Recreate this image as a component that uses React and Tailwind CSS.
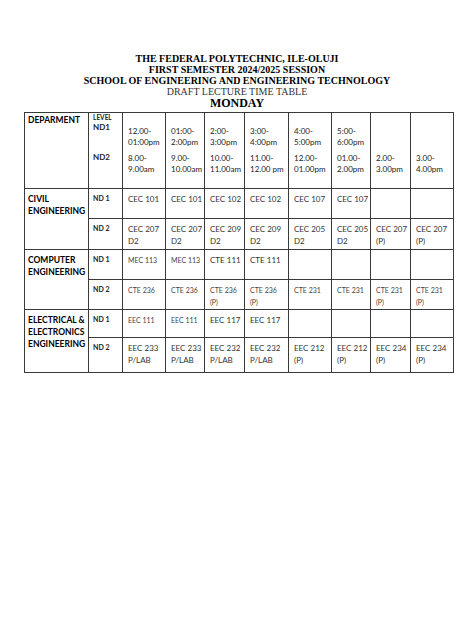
import React from 'react';

const cols = [64, 34, 43, 39, 40, 44, 43, 39, 40, 43];

const times = [
  ['12.00-', '01:00pm', '8.00-', '9.00am'],
  ['01:00-', '2:00pm', '9.00-', '10.00am'],
  ['2:00-', '3:00pm', '10.00-', '11.00am'],
  ['3:00-', '4:00pm', '11.00-', '12.00 pm'],
  ['4:00-', '5:00pm', '12.00-', '01.00pm'],
  ['5:00-', '6:00pm', '01.00-', '2.00pm'],
  ['', '', '2.00-', '3.00pm'],
  ['', '', '3.00-', '4.00pm'],
];

const depts = [
  {
    name: ['CIVIL', 'ENGINEERING'],
    nd1: { h: 'h-[30px]', cells: [['CEC 101'], ['CEC 101'], ['CEC 102'], ['CEC 102'], ['CEC 107'], ['CEC 107'], [], []] },
    nd2: { h: 'h-[31px]', cells: [['CEC 207', 'D2'], ['CEC 207', 'D2'], ['CEC 209', 'D2'], ['CEC 209', 'D2'], ['CEC 205', 'D2'], ['CEC 205', 'D2'], ['CEC 207', '(P)'], ['CEC 207', '(P)']] },
  },
  {
    name: ['COMPUTER', 'ENGINEERING'],
    nd1: { h: 'h-[30px]', cells: [['MEC 113', true], ['MEC 113', true], ['CTE 111'], ['CTE 111'], [], [], [], []] },
    nd2: { h: 'h-[30px]', cells: [['CTE 236', true], ['CTE 236', true], ['CTE 236', '(P)', true], ['CTE 236', '(P)', true], ['CTE 231', true], ['CTE 231', true], ['CTE 231', '(P)', true], ['CTE 231', '(P)', true]] },
  },
  {
    name: ['ELECTRICAL &', 'ELECTRONICS', 'ENGINEERING'],
    nd1: { h: 'h-[28px]', cells: [['EEC 111', true], ['EEC 111', true], ['EEC 117'], ['EEC 117'], [], [], [], []] },
    nd2: { h: 'h-[35px]', cells: [['EEC 233', 'P/LAB'], ['EEC 233', 'P/LAB'], ['EEC 232', 'P/LAB'], ['EEC 232', 'P/LAB'], ['EEC 212', '(P)'], ['EEC 212', '(P)'], ['EEC 234', '(P)'], ['EEC 234', '(P)']] },
  },
];

function Cell({ data }) {
  const small = data.includes(true);
  const lines = data.filter((d) => d !== true);
  return (
    <td className="border border-[#3a3a3a] align-top pl-[5px] pt-[4px]">
      <div className={small ? 'text-[7px] leading-[12px] text-[#444]' : 'text-[8px] leading-[12px] text-[#333]'}>
        {lines.map((l, i) => (
          <div key={i}>{l}</div>
        ))}
      </div>
    </td>
  );
}

export default function App() {
  return (
    <div className="w-[474px] h-[632px] bg-white pt-[53px]">
      <div className="text-center text-black leading-[11px] text-[10px]" style={{ fontFamily: '"Liberation Serif", serif' }}>
        <div className="font-bold">THE FEDERAL POLYTECHNIC, ILE-OLUJI</div>
        <div className="font-bold">FIRST SEMESTER 2024/2025 SESSION</div>
        <div className="font-bold">SCHOOL OF ENGINEERING AND ENGINEERING TECHNOLOGY</div>
        <div className="text-[#333]">DRAFT LECTURE TIME TABLE</div>
        <div className="font-bold text-[12px] leading-[13px]">MONDAY</div>
      </div>
      <div className="pl-[24px] pt-[2px]" style={{ fontFamily: 'Lato, "Open Sans", sans-serif' }}>
        <table className="table-fixed border-collapse border-[1.5px] border-[#222]" style={{ width: 429 }}>
          <colgroup>
            {cols.map((w, i) => (
              <col key={i} style={{ width: w }} />
            ))}
          </colgroup>
          <tbody>
            <tr className="h-[76px]">
              <td className="border border-[#3a3a3a] align-top pl-[3px] pt-[1px] text-[8.5px] font-bold text-black leading-[12px]">
                DEPARMENT
              </td>
              <td className="border border-[#3a3a3a] align-top pl-[4px] pt-[1px] font-bold text-[#222]">
                <div className="text-[6.5px] leading-[8px]">LEVEL</div>
                <div className="text-[8px] leading-[10px] h-[30px]">ND1</div>
                <div className="text-[8px] leading-[10px]">ND2</div>
              </td>
              {times.map((t, i) => (
                <td key={i} className="border border-[#3a3a3a] align-top pl-[5px] pt-[13px] text-[8px] leading-[11px] text-[#222]">
                  <div className="h-[27px]">
                    <div>{t[0]}</div>
                    <div>{t[1]}</div>
                  </div>
                  <div>
                    <div>{t[2]}</div>
                    <div>{t[3]}</div>
                  </div>
                </td>
              ))}
            </tr>
            {depts.map((d, di) => (
              <React.Fragment key={di}>
                <tr className={d.nd1.h}>
                  <td rowSpan={2} className="border border-[#3a3a3a] align-top pl-[3px] pt-[4px] text-[8.5px] font-bold leading-[12px] text-black">
                    {d.name.map((n, i) => (
                      <div key={i}>{n}</div>
                    ))}
                  </td>
                  <td className="border border-[#3a3a3a] align-top pl-[4px] pt-[4px] text-[7px] font-bold text-[#222] leading-[10px]">ND 1</td>
                  {d.nd1.cells.map((c, i) => (
                    <Cell key={i} data={c} />
                  ))}
                </tr>
                <tr className={d.nd2.h}>
                  <td className="border border-[#3a3a3a] align-top pl-[4px] pt-[4px] text-[7px] font-bold text-[#222] leading-[10px]">ND 2</td>
                  {d.nd2.cells.map((c, i) => (
                    <Cell key={i} data={c} />
                  ))}
                </tr>
              </React.Fragment>
            ))}
          </tbody>
        </table>
      </div>
    </div>
  );
}
